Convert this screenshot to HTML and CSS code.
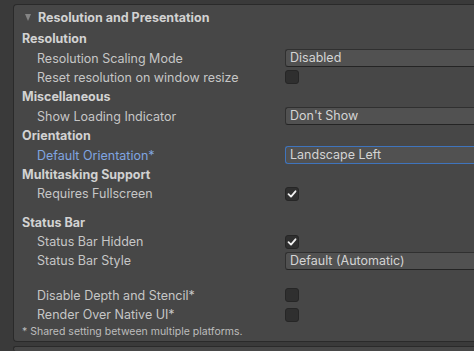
FILE: index.html
```html
<!DOCTYPE html>
<html lang="en">
<head>
  <meta charset="UTF-8">
  <title>Player Settings</title>
  <link rel="stylesheet" href="styles.css">
</head>
<body>
  <!-- Foldout: Resolution and Presentation -->
  <div class="panel">
    <div class="foldout-header">
      <span class="arrow"></span>
      <span>Resolution and Presentation</span>
    </div>

    <div class="section">Resolution</div>
    <div class="row">
      <span class="label">Resolution Scaling Mode</span>
      <div class="dropdown">Disabled</div>
    </div>
    <div class="row">
      <span class="label">Reset resolution on window resize</span>
      <span class="checkbox"></span>
    </div>

    <div class="section">Miscellaneous</div>
    <div class="row">
      <span class="label">Show Loading Indicator</span>
      <div class="dropdown">Don't Show</div>
    </div>

    <div class="section">Orientation</div>
    <div class="row">
      <span class="label label-focus">Default Orientation*</span>
      <div class="dropdown dropdown-focus">Landscape Left</div>
    </div>

    <div class="section">Multitasking Support</div>
    <div class="row">
      <span class="label">Requires Fullscreen</span>
      <span class="checkbox checked">
        <svg viewBox="0 0 14 14" width="14" height="14"><polyline points="3.5,7.2 6,9.6 10.5,4.3" fill="none" stroke="#f0f0f0" stroke-width="1.8" stroke-linecap="round" stroke-linejoin="round"/></svg>
      </span>
    </div>

    <div class="spacer-sm"></div>

    <div class="section">Status Bar</div>
    <div class="row">
      <span class="label">Status Bar Hidden</span>
      <span class="checkbox checked">
        <svg viewBox="0 0 14 14" width="14" height="14"><polyline points="3.5,7.2 6,9.6 10.5,4.3" fill="none" stroke="#f0f0f0" stroke-width="1.8" stroke-linecap="round" stroke-linejoin="round"/></svg>
      </span>
    </div>
    <div class="row">
      <span class="label">Status Bar Style</span>
      <div class="dropdown">Default (Automatic)</div>
    </div>

    <div class="spacer-lg"></div>

    <div class="row">
      <span class="label">Disable Depth and Stencil*</span>
      <span class="checkbox"></span>
    </div>
    <div class="row">
      <span class="label">Render Over Native UI*</span>
      <span class="checkbox"></span>
    </div>

    <div class="footnote">* Shared setting between multiple platforms.</div>
  </div>

  <!-- next foldout, cut off by the window -->
  <div class="panel panel-next"></div>
</body>
</html>
```

FILE: styles.css
```css
body {
  display: flex;
  flex-direction: column;
  box-sizing: border-box;
  height: 351px;
  margin: 0;
  padding: 4px 0 0 13px;
  background-color: #3a3a3a;
  font-family: Inter, "Noto Sans", sans-serif;
  font-size: 12.5px;
  color: #c6c6c6;
  overflow: hidden;
}

/* Foldout panel (runs off the right edge of the window) */
.panel {
  background-color: #474747;
  border: 1px solid #2a2a2a;
  border-right: none;
  border-radius: 4px 0 0 4px;
  padding-bottom: 1px;
}

.panel-next {
  flex: 1;
  margin-top: 4px;
  border-bottom: none;
  padding-bottom: 0;
}

.foldout-header {
  display: flex;
  align-items: center;
  height: 24px;
  padding-left: 11px;
  font-weight: bold;
  color: #d2d2d2;
}

.arrow {
  width: 0;
  height: 0;
  margin-right: 7px;
  border-left: 3.5px solid transparent;
  border-right: 3.5px solid transparent;
  border-top: 7px solid #858585;
}

.section {
  display: flex;
  align-items: center;
  height: 19.4px;
  padding-left: 8px;
  font-weight: bold;
  color: #d2d2d2;
}

.row {
  display: flex;
  align-items: center;
  height: 19.4px;
  padding-left: 23px;
}

.label {
  flex: 0 0 248px;
}

.label-focus {
  color: #80a5e0;
}

/* Popup field */
.dropdown {
  flex: 1;
  height: 16px;
  line-height: 16px;
  padding-left: 4px;
  background-color: #515151;
  border: 1px solid #303030;
  border-right: none;
  border-bottom-color: #242424;
  border-radius: 3px 0 0 3px;
  color: #d4d4d4;
}

.dropdown-focus {
  border-color: #3f74bd;
}

/* Toggle */
.checkbox {
  display: flex;
  width: 12px;
  height: 12px;
  background-color: #2f2f2f;
  border: 1px solid #262626;
  border-radius: 3px;
}

.checkbox svg {
  margin: -1px;
}

.spacer-sm {
  height: 9px;
}

.spacer-lg {
  height: 15px;
}

.footnote {
  height: 16px;
  line-height: 16px;
  padding-left: 8px;
  font-size: 10.5px;
  color: #bdbdbd;
}
```
